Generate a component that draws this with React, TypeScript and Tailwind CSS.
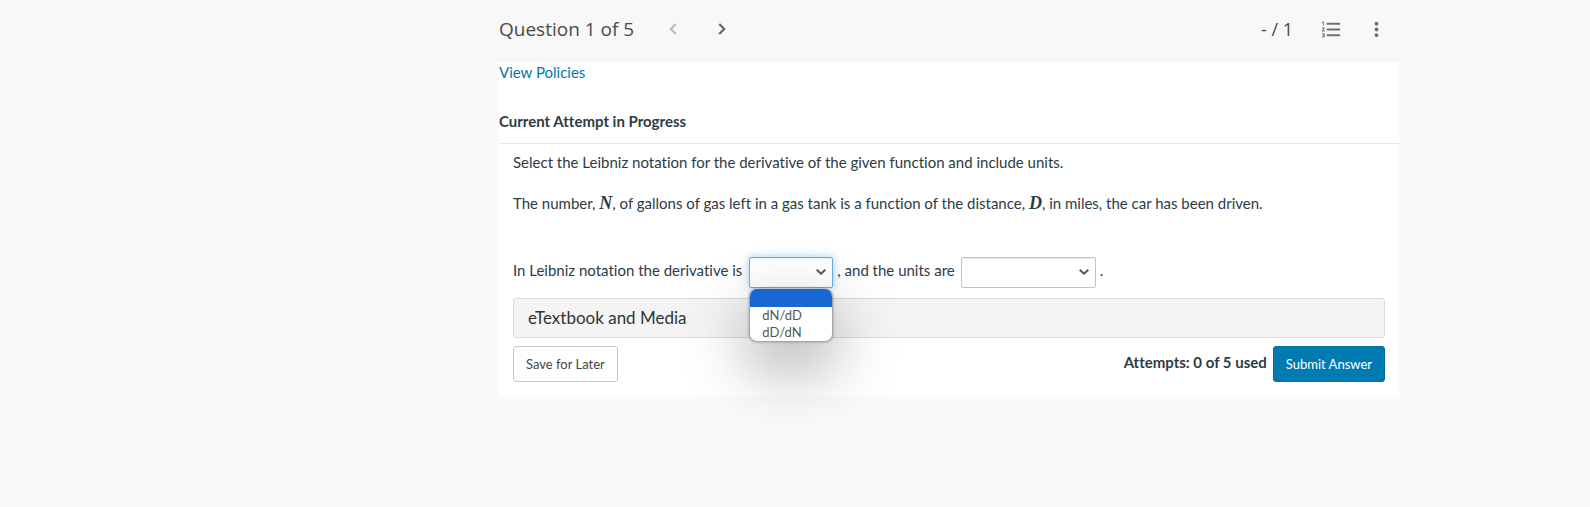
import React, { useState } from "react";
import { MdFormatListNumbered, MdMoreVert } from "react-icons/md";

interface AnswerSelectProps {
  id: string;
  label: string;
  options: string[];
  open?: boolean;
  className: string;
}

function AnswerSelect({ id, label, options, open, className }: AnswerSelectProps) {
  const [value, setValue] = useState("");

  return (
    <span className={`relative inline-block h-[31px] ${className}`}>
      <select
        id={id}
        aria-label={label}
        value={value}
        onChange={(e) => setValue(e.target.value)}
        className={`block h-full w-full appearance-none rounded-xs border bg-white px-3 text-sm outline-none ${
          open
            ? "border-[#66afe9] shadow-[inset_0_1px_1px_rgba(0,0,0,0.08),0_0_8px_rgba(102,175,233,0.6)]"
            : "border-[#c4c4c4] shadow-[inset_0_1px_1px_rgba(0,0,0,0.08)]"
        }`}
      >
        <option value=""></option>
        {options.map((option) => (
          <option key={option}>{option}</option>
        ))}
      </select>
      <svg
        viewBox="0 0 10 6"
        className="pointer-events-none absolute top-3 right-[7px] h-[6px] w-[10px]"
        fill="none"
        stroke="#555555"
        strokeWidth="2"
      >
        <path d="M0.7 0.8L5 4.7L9.3 0.8" />
      </svg>
      {open && (
        <ul className="absolute top-8 left-0 z-10 w-full overflow-hidden rounded-lg border border-t-0 border-[#a5a5a5] bg-white text-[13px] leading-[17px] text-[#555555] shadow-[0_0_3px_rgba(0,0,0,0.3),0_24px_64px_rgba(0,0,0,0.38)]">
          <li className="h-[18px] bg-[#1967d2]"></li>
          {options.map((option) => (
            <li key={option} className="px-3">
              {option}
            </li>
          ))}
        </ul>
      )}
    </span>
  );
}

function Variable({ children }: { children: React.ReactNode }) {
  return (
    <i className="font-['Liberation_Serif',serif] text-[18px] leading-none font-bold">
      {children}
    </i>
  );
}

function Chevron({ d }: { d: string }) {
  return (
    <svg viewBox="0 0 24 24" className="size-[22px]" fill="none" stroke="currentColor" strokeWidth="2.4">
      <path d={d} />
    </svg>
  );
}

export default function App() {
  return (
    <div className="min-h-screen bg-[#fafafa] font-['Lato',sans-serif] text-[15px] leading-5 text-[#2d3b45] [font-variant-ligatures:none]">
      <header className="bg-[#f8f8f8] pl-[308px]">
        <div className="mx-auto flex h-[62px] max-w-[900px] items-center pb-1 font-['Open_Sans',sans-serif] text-[18px] text-[#4a4a4a]">
          <h1 className="text-[19px]">Question 1 of 5</h1>
          <nav className="ml-7 flex gap-[27px]">
            <button aria-label="Previous question" disabled className="text-[#bbbbbb]">
              <Chevron d="M15 6.6L9.6 12L15 17.4" />
            </button>
            <button aria-label="Next question" className="text-[#666666]">
              <Chevron d="M9 6.6L14.4 12L9 17.4" />
            </button>
          </nav>
          <span className="ml-auto">- / 1</span>
          <div className="ml-[27px] flex gap-[22px] pr-[11px] text-[23px] text-[#707070]">
            <button aria-label="Question list">
              <MdFormatListNumbered />
            </button>
            <button aria-label="More options">
              <MdMoreVert />
            </button>
          </div>
        </div>
      </header>

      <main className="pl-[308px]">
        <div className="mx-auto max-w-[900px] bg-white pb-[15px]">
          <div className="border-b border-[#e8e8e8] pb-3">
            <a href="#policies" className="block text-[#0079ae]">
              View Policies
            </a>
            <h2 className="mt-[29px] font-bold">Current Attempt in Progress</h2>
          </div>

          <div className="px-[14px] pt-2">
            <p>
              Select the Leibniz notation for the derivative of the given function and include
              units.
            </p>
            <p className="mt-[21px]">
              The number, <Variable>N</Variable>, of gallons of gas left in a gas tank is a
              function of the distance, <Variable>D</Variable>, in miles, the car has been driven.
            </p>

            <div className="mt-11 flex items-center">
              <label htmlFor="derivative" className="pb-1.5">
                In Leibniz notation the derivative is
              </label>
              <AnswerSelect
                id="derivative"
                label="Derivative"
                options={["dN/dD", "dD/dN"]}
                open
                className="ml-[7px] w-[84px]"
              />
              <label htmlFor="units" className="ml-1 pb-1.5">
                , and the units are
              </label>
              <AnswerSelect
                id="units"
                label="Units"
                options={["gallons/mile", "miles/gallon"]}
                className="ml-1.5 w-[135px]"
              />
              <span className="ml-1 pb-1.5">.</span>
            </div>

            <button className="mt-[10px] block h-10 w-full rounded-[3px] border border-[#dadada] bg-[#f4f4f4] px-[14px] text-left text-[17px] text-[#333333]">
              eTextbook and Media
            </button>

            <div className="mt-2 flex items-center">
              <button className="h-9 rounded-[3px] border border-[#c8c8c8] bg-white px-3 text-[13px] text-[#444444]">
                Save for Later
              </button>
              <span className="ml-auto pb-1 font-bold">Attempts: 0 of 5 used</span>
              <button className="ml-1.5 h-9 rounded-[3px] border border-[#006e9e] bg-[#007bb1] px-3 text-[13px] text-white">
                Submit Answer
              </button>
            </div>
          </div>
        </div>
      </main>
    </div>
  );
}
